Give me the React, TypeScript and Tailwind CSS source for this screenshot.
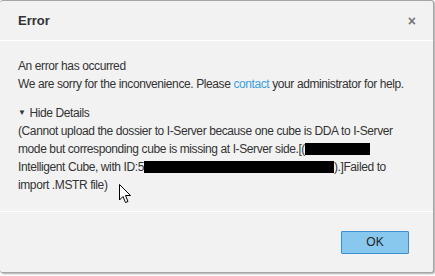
import React from 'react';

const font = { fontFamily: '"Liberation Sans", Arial, sans-serif' };

function Redacted({ w }: { w: number }) {
  return <span className="inline-block h-[12px] bg-black align-[-2px]" style={{ width: w }} />;
}

function Cursor() {
  return (
    <svg className="absolute left-[119px] top-[184px]" width="13" height="20" viewBox="0 0 13 20">
      <path d="M0.5 0.5 L0.5 16 L4 12.5 L6.5 18.5 L9 17.5 L6.5 11.5 L11.5 11.5 Z" fill="#fff" stroke="#000" strokeWidth="1" strokeLinejoin="miter" />
    </svg>
  );
}

export default function App() {
  return (
    <div className="w-[435px] h-[276px] bg-white relative overflow-hidden" style={font}>
      <div className="w-[434px] h-[273px] bg-[#f2f2f2] border border-l-0 border-[#a6a6a6] rounded-[3px] shadow-[1px_1px_2px_rgba(0,0,0,0.35)] flex flex-col text-[12px] text-[#333]">
        {/* header */}
        <div className="h-[40px] shrink-0 flex items-center justify-between pl-[18px] pr-[17px] border-b border-white">
          <span className="font-bold text-[13px] text-[#333]">Error</span>
          <span className="text-[#777] font-bold text-[14px] leading-none">×</span>
        </div>

        {/* body */}
        <div className="flex-1 pl-[18px] pt-[16px] leading-[18px] whitespace-nowrap tracking-[-0.4px]">
          <div>An error has occurred</div>
          <div>
            We are sorry for the inconvenience. Please <span className="text-[#3a9ee0]">contact</span> your administrator for help.
          </div>
          <div className="mt-[11px] flex items-center gap-[4px]">
            <span className="text-[8px]">▼</span>
            <span>Hide Details</span>
          </div>
          <div>(Cannot upload the dossier to I-Server because one cube is DDA to I-Server</div>
          <div>
            mode but corresponding cube is missing at I-Server side.[(<Redacted w={65} />
          </div>
          <div>
            Intelligent Cube, with ID:5<Redacted w={190} />).]Failed to
          </div>
          <div>import .MSTR file)</div>
        </div>

        {/* footer */}
        <div className="h-[61px] shrink-0 border-t border-white flex items-center justify-end pr-[24px]">
          <button className="w-[68px] h-[23px] bg-[#88c8ee] border border-[#3d8fd1] rounded-[1px] text-[12px] text-[#222]">
            OK
          </button>
        </div>
      </div>
      <Cursor />
    </div>
  );
}
